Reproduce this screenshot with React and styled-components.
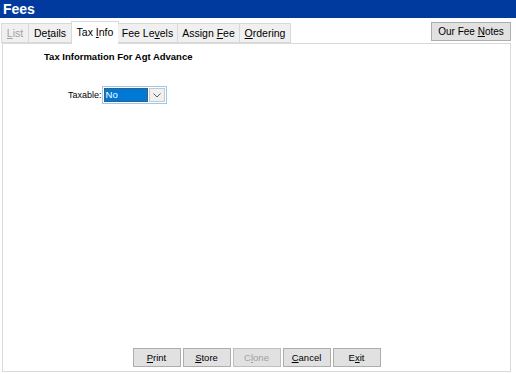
import React from "react";
import styled, { createGlobalStyle } from "styled-components";

const Global = createGlobalStyle`
  html, body { margin: 0; padding: 0; background: #ffffff; }
  body { font-family: "Liberation Sans", Arial, sans-serif; }
  #root { width: 516px; height: 374px; }
`;

const Window = styled.div`
  width: 516px;
  height: 374px;
  display: flex;
  flex-direction: column;
  background: #ffffff;
  overflow: hidden;
`;

const TitleBar = styled.div`
  height: 18px;
  background: #003a9f;
  color: #ffffff;
  font-weight: bold;
  font-size: 14px;
  line-height: 18px;
  padding-left: 3px;
`;

const TabRow = styled.div`
  display: flex;
  align-items: flex-end;
  height: 22px;
  margin-top: 3px;
  padding-left: 1px;
  padding-right: 5px;
  position: relative;
  z-index: 1;
`;

const Tab = styled.div`
  box-sizing: border-box;
  height: ${(p) => (p.$active ? "23px" : "20px")};
  margin-bottom: ${(p) => (p.$active ? "-1px" : "0")};
  width: ${(p) => p.$w}px;
  margin-left: ${(p) => (p.$active ? "-1px" : "0")};
  margin-right: ${(p) => (p.$active ? "-1px" : "0")};
  background: ${(p) => (p.$active ? "#ffffff" : "#f0f0f0")};
  border: 1px solid #d9d9d9;
  border-bottom: ${(p) => (p.$active ? "none" : "1px solid #d9d9d9")};
  border-left: ${(p) => (p.$first || p.$active ? "1px solid #d9d9d9" : "none")};
  display: flex;
  align-items: center;
  justify-content: center;
  font-size: 10.5px;
  color: ${(p) => (p.$disabled ? "#a0a0a0" : "#000000")};
  padding-bottom: ${(p) => (p.$active ? "2px" : "0")};
  white-space: nowrap;
`;

const Text = styled.span`
  white-space: pre;
`;

const U = styled.span`
  text-decoration: underline;
`;

const Spacer = styled.div`
  flex: 1;
`;

const NotesButton = styled.div`
  box-sizing: border-box;
  align-self: flex-start;
  margin-top: 1px;
  width: 80px;
  height: 19px;
  background: #e1e1e1;
  border: 1px solid #adadad;
  font-size: 10px;
  display: flex;
  align-items: center;
  justify-content: center;
  white-space: nowrap;
`;

const Panel = styled.div`
  box-sizing: border-box;
  margin: 0 5px 2px 2px;
  flex: 1;
  border: 1px solid #d9d9d9;
  display: flex;
  flex-direction: column;
  padding: 7px 0 4px 0;
`;

const Heading = styled.div`
  font-weight: bold;
  font-size: 9.5px;
  padding-left: 41px;
  line-height: 12px;
`;

const FieldRow = styled.div`
  display: flex;
  align-items: center;
  margin-top: 23px;
  padding-left: 65px;
  font-size: 9px;
`;

const Label = styled.span`
  margin-right: 0;
`;

const Select = styled.div`
  box-sizing: border-box;
  display: flex;
  align-items: stretch;
  width: 65px;
  height: 18px;
  border: 1px solid #99c8f0;
  padding: 1px;
  gap: 1px;
`;

const SelectValue = styled.div`
  flex: 1;
  background: #0078d7;
  color: #ffffff;
  outline: 1px dotted #7a4a10;
  outline-offset: -1px;
  font-size: 9.5px;
  line-height: 14px;
  padding-left: 2px;
`;

const DropButton = styled.div`
  box-sizing: border-box;
  width: 16px;
  background: #f0f0f0;
  border: 1px solid #c8c8c8;
  display: flex;
  align-items: center;
  justify-content: center;
`;

const ButtonBar = styled.div`
  margin-top: auto;
  display: flex;
  justify-content: center;
  gap: 2px;
`;

const Button = styled.div`
  box-sizing: border-box;
  width: 48px;
  height: 19px;
  background: #e1e1e1;
  border: 1px solid ${(p) => (p.$disabled ? "#bfbfbf" : "#adadad")};
  color: ${(p) => (p.$disabled ? "#a0a0a0" : "#000000")};
  font-size: 9.5px;
  display: flex;
  align-items: center;
  justify-content: center;
`;

const tabs = [
  { key: "list", w: 28, first: true, disabled: true, label: <><U>L</U>ist</> },
  { key: "details", w: 43, label: <>De<U>t</U>ails</> },
  { key: "tax", w: 48, active: true, label: <>Tax <U>I</U>nfo</> },
  { key: "levels", w: 60, label: <>Fee Le<U>v</U>els</> },
  { key: "assign", w: 62, label: <>Assign <U>F</U>ee</> },
  { key: "order", w: 51, label: <><U>O</U>rdering</> },
];

export default function App() {
  return (
    <>
      <Global />
      <Window>
        <TitleBar>Fees</TitleBar>
        <TabRow>
          {tabs.map((t) => (
            <Tab
              key={t.key}
              $w={t.w}
              $first={t.first}
              $active={t.active}
              $disabled={t.disabled}
            >
              <Text>{t.label}</Text>
            </Tab>
          ))}
          <Spacer />
          <NotesButton>
            <Text>Our Fee <U>N</U>otes</Text>
          </NotesButton>
        </TabRow>
        <Panel>
          <Heading>Tax Information For Agt Advance</Heading>
          <FieldRow>
            <Label>Taxable:</Label>
            <Select>
              <SelectValue>No</SelectValue>
              <DropButton>
                <svg width="8" height="5" viewBox="0 0 8 5">
                  <path d="M0.5 0.5 L4 4 L7.5 0.5" fill="none" stroke="#606060" strokeWidth="1" />
                </svg>
              </DropButton>
            </Select>
          </FieldRow>
          <ButtonBar>
            <Button><Text><U>P</U>rint</Text></Button>
            <Button><Text><U>S</U>tore</Text></Button>
            <Button $disabled><Text>C<U>l</U>one</Text></Button>
            <Button><Text><U>C</U>ancel</Text></Button>
            <Button><Text>E<U>x</U>it</Text></Button>
          </ButtonBar>
        </Panel>
      </Window>
    </>
  );
}
